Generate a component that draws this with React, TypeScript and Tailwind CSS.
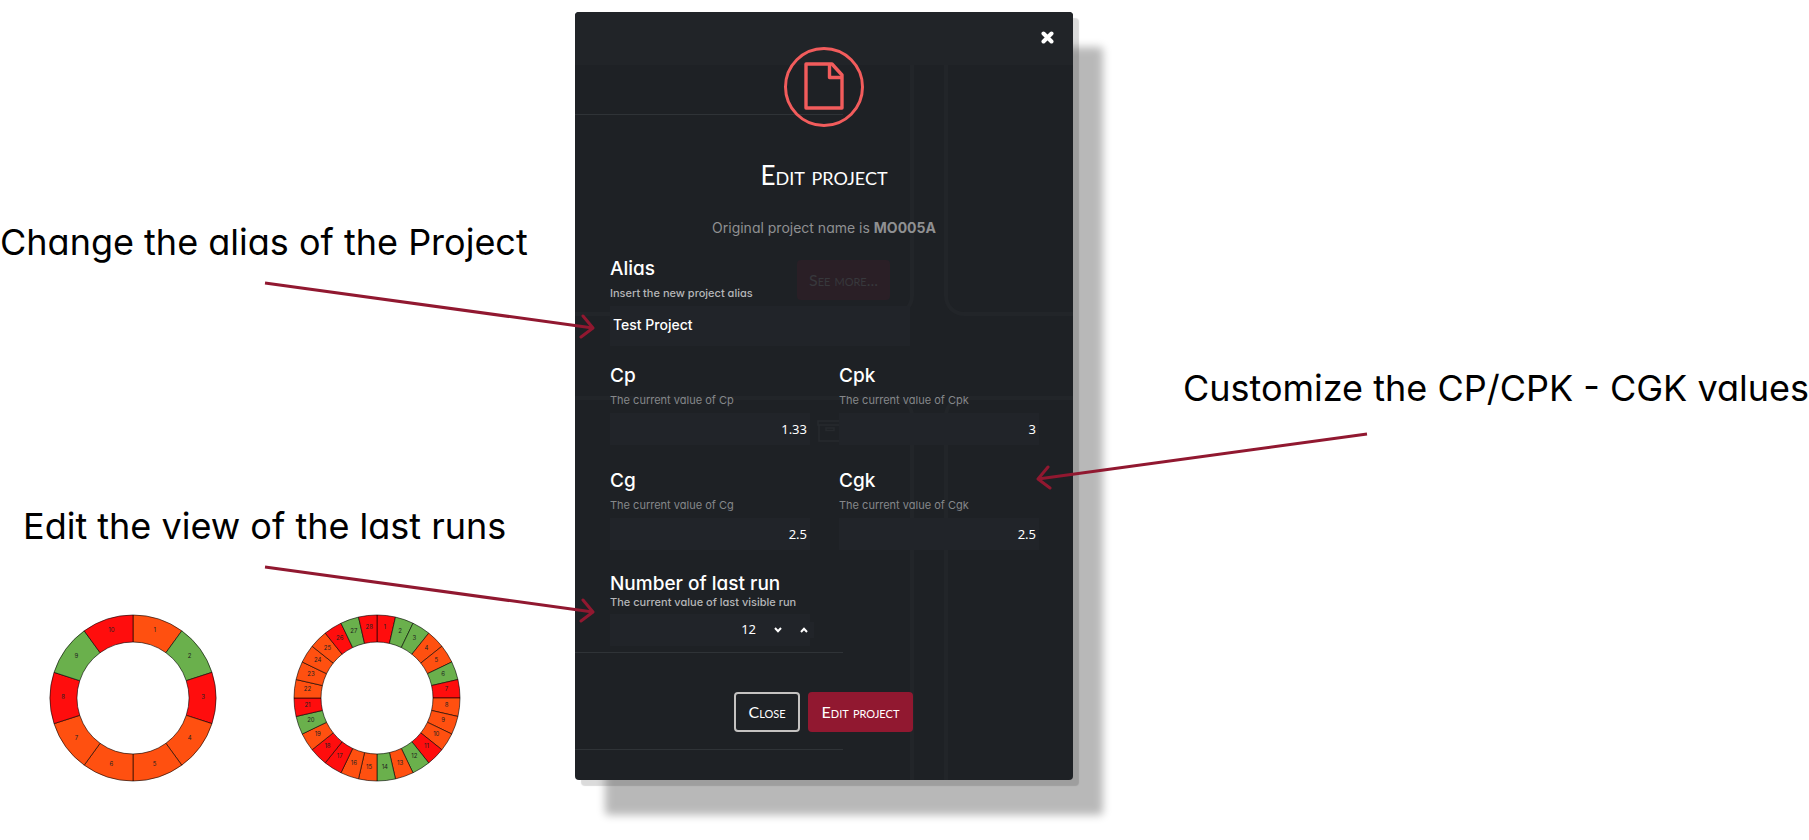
import { useState } from "react";

const R = "#ff0d0d";
const O = "#ff5010";
const G = "#6ab04c";

const TEN_RUNS = [O, G, R, O, O, O, O, R, G, R];
const ALL_RUNS = [
  R, G, G, O, O, G, R, O, O, O, R, G, O, G,
  O, O, R, R, O, G, R, O, O, O, O, R, G, R,
];

function point(radius: number, turn: number) {
  const a = turn * Math.PI * 2 - Math.PI / 2;
  return [84 + radius * Math.cos(a), 84 + radius * Math.sin(a)];
}

function RunRing({ runs, label }: { runs: string[]; label: string }) {
  const n = runs.length;
  return (
    <svg width="168" height="168" viewBox="0 0 168 168" role="img" aria-label={label}>
      {runs.map((color, i) => {
        const [x1, y1] = point(83, i / n);
        const [x2, y2] = point(83, (i + 1) / n);
        const [x3, y3] = point(56, (i + 1) / n);
        const [x4, y4] = point(56, i / n);
        const [tx, ty] = point(70, (i + 0.5) / n);
        return (
          <g key={i}>
            <path
              d={`M${x1} ${y1}A83 83 0 0 1 ${x2} ${y2}L${x3} ${y3}A56 56 0 0 0 ${x4} ${y4}Z`}
              fill={color}
              stroke="#000"
              strokeWidth="0.6"
            />
            <text x={tx} y={ty + 1} textAnchor="middle" fontSize="6" fill="#222">
              {i + 1}
            </text>
          </g>
        );
      })}
    </svg>
  );
}

function Arrow({ flip, className }: { flip?: boolean; className: string }) {
  return (
    <svg
      width="332"
      height="60"
      viewBox="0 0 332 60"
      fill="none"
      stroke="#911830"
      strokeWidth="3"
      className={`relative z-10 shrink-0 ${className}`}
      aria-hidden="true"
    >
      {flip ? (
        <>
          <path d="M331 2L2 47" />
          <path d="M12 35L2 47L14 56" strokeLinecap="round" strokeLinejoin="round" />
        </>
      ) : (
        <>
          <path d="M2 2L330 47" />
          <path d="M320 35L330 47L318 56" strokeLinecap="round" strokeLinejoin="round" />
        </>
      )}
    </svg>
  );
}

// Faded page that shines through the dialog
function Backdrop() {
  return (
    <div className="absolute inset-0 flex flex-col" aria-hidden="true">
      <div className="h-[53px] shrink-0 bg-[#212428]" />
      <div className="flex h-[251px] shrink-0 gap-[30px]">
        <div className="flex w-[339px] flex-col justify-between rounded-br-[20px] border-r-4 border-b-4 border-[#222529]">
          <hr className="mt-[49px] w-[268px] border-[#2f3337]" />
          <button
            type="button"
            tabIndex={-1}
            className="mr-5 mb-3 h-10 w-[93px] self-end rounded bg-[#2a1f26] font-['Lato',sans-serif] text-base text-[#37383c] [font-variant-caps:small-caps]"
          >
            See more...
          </button>
        </div>
        <div className="flex-1 rounded-bl-[20px] border-b-4 border-l-4 border-[#222529]" />
      </div>
      <div className="mt-20 flex flex-1 gap-[30px]">
        <div className="w-[339px] rounded-tr-[20px] border-t-4 border-r-4 border-[#222529] pt-5 pl-[242px]">
          <svg width="30" height="22" viewBox="0 0 30 22" fill="none" stroke="#272a2e" strokeWidth="1.5">
            <path d="M1 1H29V5H1ZM2 5V21H28V5M9 8H17V10.5H9Z" />
          </svg>
        </div>
        <div className="flex-1 rounded-tl-[20px] border-t-4 border-l-4 border-[#222529]" />
      </div>
    </div>
  );
}

function ValueField({ id, name, value }: { id: string; name: string; value: string }) {
  return (
    <div className="flex flex-col">
      <label htmlFor={id} className="text-[19px] leading-6 font-medium text-white">
        {name}
      </label>
      <p className="mt-1 text-[11px] leading-4 text-[#85878a]">The current value of {name}</p>
      <input
        id={id}
        type="text"
        inputMode="decimal"
        defaultValue={value}
        className="mt-[5px] h-8 w-full bg-[#212429] px-[3px] pb-px text-right font-['Noto_Sans',sans-serif] text-[13px] text-white outline-none"
      />
    </div>
  );
}

function EditProjectDialog() {
  const [runs, setRuns] = useState(12);

  return (
    <section
      role="dialog"
      aria-labelledby="dialog-title"
      className="relative self-start overflow-hidden rounded bg-[#1e2125] shadow-[6px_6px_1px_rgba(0,0,0,0.14),30px_35px_8px_rgba(0,0,0,0.28)]"
    >
      <Backdrop />

      <button type="button" aria-label="Close dialog" className="absolute top-[18px] right-[18px] z-10 p-px">
        <svg width="13" height="13" viewBox="0 0 13 13" stroke="#fff" strokeWidth="4" strokeLinecap="round">
          <path d="M2.5 2.5L10.5 10.5M10.5 2.5L2.5 10.5" />
        </svg>
      </button>

      <form className="relative" onSubmit={(e) => e.preventDefault()}>
        {/* Header */}
        <div className="flex flex-col items-center pt-[35px]">
          <div className="flex size-20 items-center justify-center rounded-full border-3 border-[#f25c5c]">
            <svg width="40" height="50" viewBox="0 0 40 50" fill="none" stroke="#f25c5c" strokeWidth="3.4" strokeLinejoin="round">
              <path d="M2 2H28L38 13V46H2Z" />
              <path d="M25.5 2V15.5H38" />
            </svg>
          </div>
          <h1
            id="dialog-title"
            className="mt-8 font-['Lato',sans-serif] text-[26px] leading-8 text-white [font-variant-caps:small-caps]"
          >
            Edit project
          </h1>
          <p className="mt-[27px] text-sm leading-5 text-[#8f9092]">
            Original project name is <b className="font-bold">MO005A</b>
          </p>
        </div>

        {/* Fields */}
        <div className="flex flex-col pt-[19px] pr-[34px] pl-[35px]">
          <label htmlFor="alias" className="text-[19px] leading-6 font-medium text-white">
            Alias
          </label>
          <p className="mt-1 text-[11px] leading-4 font-medium text-[#b5b6b8]">Insert the new project alias</p>
          <input
            id="alias"
            type="text"
            defaultValue="Test Project"
            className="mt-[5px] h-10 w-[300px] bg-[#212429] px-[3px] pb-[3px] text-sm font-medium text-white outline-none"
          />

          <div className="mt-[18px] grid grid-cols-2 gap-x-[29px] gap-y-6">
            <ValueField id="cp" name="Cp" value="1.33" />
            <ValueField id="cpk" name="Cpk" value="3" />
            <ValueField id="cg" name="Cg" value="2.5" />
            <ValueField id="cgk" name="Cgk" value="2.5" />
          </div>

          <label htmlFor="runs" className="mt-6 text-[19px] leading-5 font-medium text-white">
            Number of last run
          </label>
          <p className="text-[11px] leading-4 font-medium text-[#b5b6b8]">The current value of last visible run</p>
          <div className="mt-1 flex h-8 w-[200px] items-center bg-[#212429]">
            <input
              id="runs"
              type="text"
              inputMode="numeric"
              value={runs}
              onChange={(e) => setRuns(Number(e.target.value) || 0)}
              className="w-[146px] shrink-0 bg-transparent text-right font-['Noto_Sans',sans-serif] text-[13px] text-white outline-none"
            />
            <button
              type="button"
              aria-label="Fewer runs"
              onClick={() => setRuns(runs - 1)}
              className="ml-3 flex h-4 w-5 shrink-0 items-center justify-center"
            >
              <svg width="8" height="6" viewBox="0 0 8 6" fill="none" stroke="#fff" strokeWidth="2">
                <path d="M1 1L4 4.2L7 1" />
              </svg>
            </button>
            <button
              type="button"
              aria-label="More runs"
              onClick={() => setRuns(runs + 1)}
              className="ml-1.5 flex h-4 w-5 shrink-0 items-center justify-center bg-[#212429]"
            >
              <svg width="8" height="6" viewBox="0 0 8 6" fill="none" stroke="#fff" strokeWidth="2">
                <path d="M1 5L4 1.8L7 5" />
              </svg>
            </button>
          </div>
        </div>

        {/* Footer */}
        <hr className="mt-1.5 w-[268px] border-[#2f3337]" />
        <div className="mt-[39px] flex justify-end gap-2 pr-40">
          <button
            type="button"
            className="h-10 w-[66px] rounded border-2 border-[#c4c2c1] font-['Lato',sans-serif] text-base text-white [font-variant-caps:small-caps]"
          >
            Close
          </button>
          <button
            type="submit"
            className="h-10 w-[105px] rounded bg-[#911830] font-['Lato',sans-serif] text-base text-white [font-variant-caps:small-caps]"
          >
            Edit project
          </button>
        </div>
        <hr className="mt-[17px] mb-[30px] w-[268px] border-[#2f3337]" />
      </form>
    </section>
  );
}

export default function App() {
  return (
    <main className="grid grid-cols-[575fr_498px_736fr] overflow-x-clip bg-white pt-3 pb-[58px] font-['Inter',sans-serif] text-black [font-feature-settings:'cv11']">
      {/* Left notes */}
      <div className="flex flex-col items-end pt-[206px]">
        <h2 className="w-full text-4xl leading-[48px] whitespace-nowrap">Change the alias of the Project</h2>
        <Arrow className="mt-[15px] -mr-5" />
        <h2 className="mt-[161px] w-full pl-[23px] text-4xl leading-[48px] whitespace-nowrap">
          Edit the view of the last runs
        </h2>
        <Arrow className="mt-[15px] -mr-5" />
        <div className="-mt-[11px] flex w-full gap-[76px] pl-[49px]">
          <RunRing runs={TEN_RUNS} label="Last 10 runs" />
          <RunRing runs={ALL_RUNS} label="Last 28 runs" />
        </div>
      </div>

      <EditProjectDialog />

      {/* Right note */}
      <div className="flex flex-col pt-[352px]">
        <h2 className="self-end text-4xl leading-[48px] whitespace-nowrap">
          Customize the CP/CPK - CGK values
        </h2>
        <Arrow flip className="mt-5 -ml-[37px]" />
      </div>
    </main>
  );
}
